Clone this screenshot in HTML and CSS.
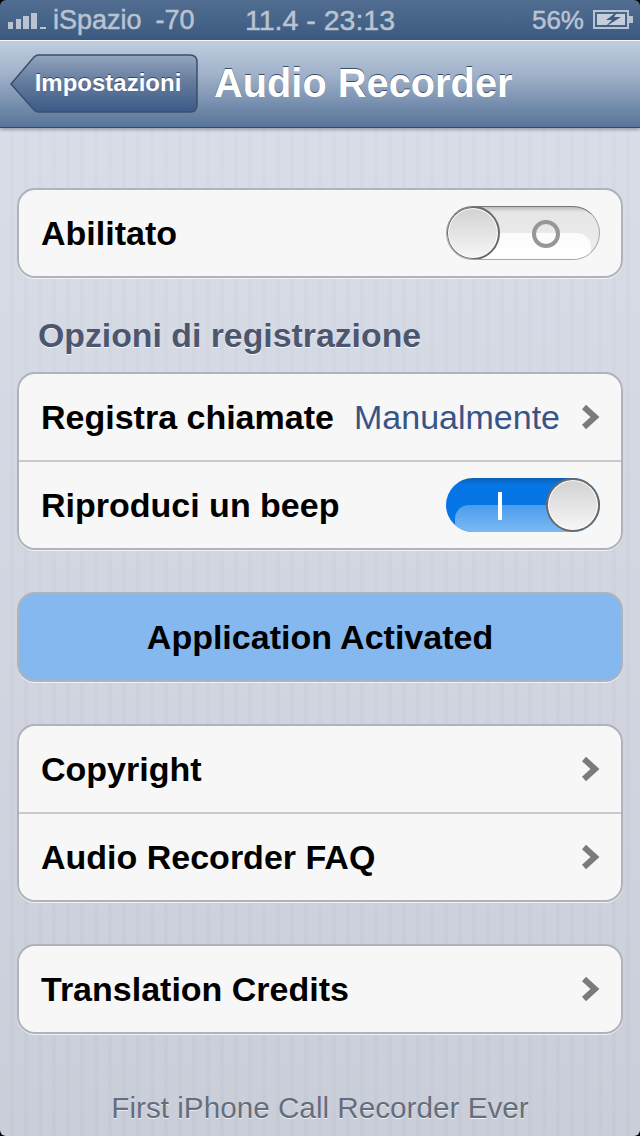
FILE: index.html
```html
<!DOCTYPE html>
<html lang="it">
<head>
<meta charset="utf-8">
<title>Audio Recorder</title>
<link rel="stylesheet" href="styles.css">
</head>
<body>
<div class="screen">
  <header class="status">
    <div class="status-left">
      <svg class="signal" width="38" height="16" viewBox="0 0 38 16"><rect x="0" y="9" width="5" height="7"/><rect x="8" y="6" width="5" height="10"/><rect x="15" y="3" width="6" height="13"/><rect x="23" y="0" width="6" height="16"/><rect x="32" y="14" width="6" height="2"/></svg>
      <span class="carrier">iSpazio</span>
      <span class="carrier signal-num">-70</span>
    </div>
    <div class="status-time">11.4 - 23:13</div>
    <div class="status-right">
      <span class="percent">56%</span>
      <svg class="battery" width="42" height="20" viewBox="0 0 42 20"><rect x="2" y="2" width="34" height="17" fill="none" stroke="#b9c3d1" stroke-width="2"/><rect x="5" y="5" width="28" height="11" fill="#c6cedb"/><rect x="37" y="7" width="4" height="7" fill="#b9c3d1"/><path d="M26 2 L14 11 L20 11 L13 18 L29 8 L22 8 Z" fill="#3e5b81"/></svg>
    </div>
  </header>
  <nav class="navbar">
    <div class="back">
      <svg class="back-shape" width="190" height="60" viewBox="0 0 190 60">
        <defs><linearGradient id="backg" x1="0" y1="0" x2="0" y2="1"><stop offset="0" stop-color="#93a5bf"/><stop offset="0.5" stop-color="#62799c"/><stop offset="1" stop-color="#3c5b87"/></linearGradient></defs>
        <path d="M1 30 L24 3 Q26 1 29 1 L180 1 Q187 1 187 8 L187 51 Q187 58 180 58 L29 58 Q26 58 24 56 Z" fill="url(#backg)" stroke="#3d4f68" stroke-width="1.5"/>
      </svg>
      <span class="back-label">Impostazioni</span>
    </div>
    <h1 class="title">Audio Recorder</h1>
  </nav>
  <main class="content">
    <section class="group first">
      <div class="row">
        <span class="label">Abilitato</span>
        <div class="switch off"><span class="knob"></span><span class="ring"></span></div>
      </div>
    </section>
    <h2 class="section-title">Opzioni di registrazione</h2>
    <section class="group">
      <div class="row">
        <span class="label">Registra chiamate</span>
        <span class="value">Manualmente</span>
        <svg class="chev" width="20" height="26" viewBox="0 0 20 26"><path d="M4 3 L15 13 L4 23" fill="none" stroke="#7b7b7b" stroke-width="6"/></svg>
      </div>
      <div class="row">
        <span class="label">Riproduci un beep</span>
        <div class="switch on"><span class="bar"></span><span class="knob"></span></div>
      </div>
    </section>
    <div class="group activated"><span class="label">Application Activated</span></div>
    <section class="group">
      <div class="row">
        <span class="label">Copyright</span>
        <svg class="chev" width="20" height="26" viewBox="0 0 20 26"><path d="M4 3 L15 13 L4 23" fill="none" stroke="#7b7b7b" stroke-width="6"/></svg>
      </div>
      <div class="row">
        <span class="label">Audio Recorder FAQ</span>
        <svg class="chev" width="20" height="26" viewBox="0 0 20 26"><path d="M4 3 L15 13 L4 23" fill="none" stroke="#7b7b7b" stroke-width="6"/></svg>
      </div>
    </section>
    <section class="group">
      <div class="row">
        <span class="label">Translation Credits</span>
        <svg class="chev" width="20" height="26" viewBox="0 0 20 26"><path d="M4 3 L15 13 L4 23" fill="none" stroke="#7b7b7b" stroke-width="6"/></svg>
      </div>
    </section>
    <p class="footer">First iPhone Call Recorder Ever</p>
  </main>
</div>
</body>
</html>
```
FILE: styles.css
```css
* { box-sizing: border-box; }
html, body { margin: 0; padding: 0; }
body { width: 640px; height: 1136px; overflow: hidden; font-family: "Liberation Sans", Arial, sans-serif; background: #000; }
.screen { width: 640px; height: 1136px; display: flex; flex-direction: column; overflow: hidden; border-radius: 6px; }

.status { height: 40px; flex: none; display: flex; align-items: center; justify-content: space-between; position: relative; padding: 0 6px 0 8px; background: linear-gradient(#516d91, #3c5a81); color: #b9c3d1; font-size: 27px; font-weight: 400; -webkit-text-stroke: 0.5px #b9c3d1; }
.status-left { display: flex; align-items: center; }
.signal { fill: #b9c3d1; margin-right: 7px; margin-top: 1px; }
.carrier { line-height: 40px; }
.signal-num { margin-left: 14px; }
.status-time { position: absolute; left: 245px; top: 0; line-height: 40px; font-size: 28.5px; }
.status-right { display: flex; align-items: center; gap: 8px; }
.percent { font-size: 26px; }
.battery { margin-top: -2px; }

.navbar { height: 88px; flex: none; display: flex; align-items: center; padding-left: 10px; background: linear-gradient(#c0cddf 0, #9fb0c8 40%, #567499 100%); border-top: 1px solid #f4f6f9; border-bottom: 1px solid #2f4a6b; box-shadow: 0 2px 3px rgba(40, 50, 70, 0.35); position: relative; z-index: 1; }
.back { width: 190px; height: 60px; flex: none; position: relative; display: flex; align-items: center; justify-content: center; }
.back-shape { position: absolute; left: 0; top: 0; }
.back-label { position: relative; margin: -3px 0 0 6px; color: #fff; font-size: 24px; font-weight: 700; text-shadow: 0 -1px 0 #33496a; }
.title { margin: -1px 0 0 14px; color: #fff; font-size: 39.8px; font-weight: 700; line-height: 1; text-shadow: 0 -1px 0 #3c4d66; }

.content { flex: 1; padding: 60px 17px 0; background: repeating-linear-gradient(90deg, rgba(255,255,255,0.08) 0 10px, rgba(255,255,255,0) 10px 14px), linear-gradient(#d5dae5, #c6cad6); }
.group { width: 606px; border: 2px solid #b0b3bb; border-radius: 18px; background: #f7f7f7; margin-bottom: 42px; box-shadow: 0 1px 0 rgba(255,255,255,0.7); overflow: hidden; }
.group.first { margin-bottom: 38px; }
.section-title { margin: 0 0 18px 21px; height: 38px; line-height: 38px; font-size: 33.8px; font-weight: 700; color: #4c566f; text-shadow: 0 1px 0 rgba(255,255,255,0.8); }
.row { height: 86px; display: flex; align-items: center; padding: 0 21px 0 22px; }
.row + .row { height: 88px; border-top: 2px solid #cbcbcd; }
.label { font-size: 34px; font-weight: 700; color: #000; }
.value { margin-left: auto; font-size: 34px; color: #385487; }
.value + .chev { margin-left: 20px; }
.label + .chev, .label + .switch { margin-left: auto; }

.switch { width: 154px; height: 54px; border-radius: 27px; position: relative; flex: none; display: flex; align-items: center; overflow: hidden; }
.switch::before { content: ""; position: absolute; top: 50%; bottom: 0; }
.switch.off { background: linear-gradient(#bdbdbd 0, #e6e6e6 10%, #eeeeee 100%); border: 1px solid #a6a6a6; border-top-color: #777; justify-content: flex-start; }
.switch.off::before { left: 0; right: 8px; background: linear-gradient(#fbfbfb, #ffffff); border-top-right-radius: 14px; }
.switch.on { background: linear-gradient(#0a5fb0 0, #0676e6 12%, #0676e6 100%); justify-content: flex-end; }
.switch.on::before { left: 9px; right: 0; background: linear-gradient(#4b9cee, #7cb9f2); border-top-left-radius: 14px; }
.knob { width: 54px; height: 54px; border-radius: 50%; flex: none; background: linear-gradient(#d2d2d2, #f6f6f6); border: 2px solid #6a6a6a; box-shadow: inset 0 0 0 1px #fff; position: relative; z-index: 1; }
.switch.off .knob { margin-left: -1px; }
.ring { width: 28px; height: 28px; border-radius: 50%; border: 4px solid #979797; position: absolute; left: 85px; top: 13px; }
.bar { width: 4px; height: 28px; background: #fff; position: absolute; left: 52px; top: 14px; }

.group.activated { height: 90px; background: #85b8ef; display: flex; align-items: center; justify-content: center; }
.footer { margin: 57px 0 0; text-align: center; font-size: 29.7px; line-height: 34px; color: #666d7d; text-shadow: 0 1px 0 rgba(255,255,255,0.7); }
```
